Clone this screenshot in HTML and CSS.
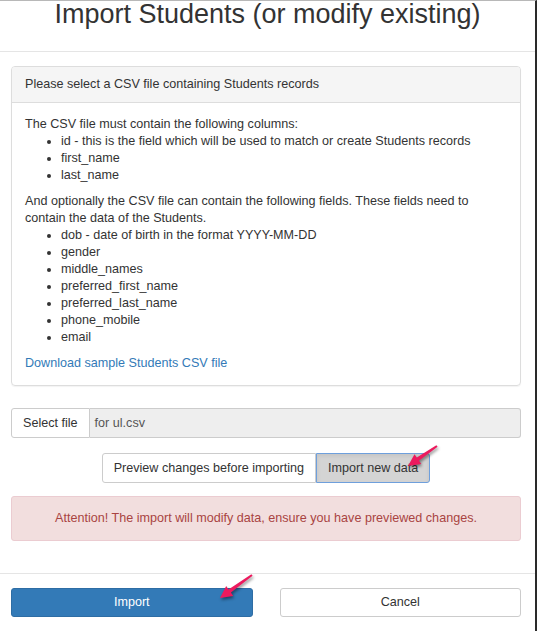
FILE: index.html
```html
<!DOCTYPE html>
<html>
<head>
<meta charset="utf-8">
<link rel="stylesheet" href="styles.css">
</head>
<body>
<div class="modal">
  <div class="modal-header">
    <h4 class="modal-title">Import Students (or modify existing)</h4>
  </div>
  <div class="modal-body">
    <div class="panel">
      <div class="panel-heading">Please select a CSV file containing Students records</div>
      <div class="panel-body">
        <p>The CSV file must contain the following columns:</p>
        <ul>
          <li>id - this is the field which will be used to match or create Students records</li>
          <li>first_name</li>
          <li>last_name</li>
        </ul>
        <p>And optionally the CSV file can contain the following fields. These fields need to contain the data of the Students.</p>
        <ul>
          <li>dob - date of birth in the format YYYY-MM-DD</li>
          <li>gender</li>
          <li>middle_names</li>
          <li>preferred_first_name</li>
          <li>preferred_last_name</li>
          <li>phone_mobile</li>
          <li>email</li>
        </ul>
        <a class="link" href="#">Download sample Students CSV file</a>
      </div>
    </div>
    <div class="input-group">
      <span class="btn-file">Select file</span>
      <span class="file-name">for ul.csv</span>
    </div>
    <div class="btn-group-wrap">
      <div class="btn-group">
        <span class="btn-opt">Preview changes before importing</span>
        <span class="btn-opt active">Import new data</span>
      </div>
    </div>
    <div class="alert">Attention! The import will modify data, ensure you have previewed changes.</div>
  </div>
  <div class="modal-footer">
    <span class="btn btn-primary">Import</span>
    <span class="btn btn-default">Cancel</span>
  </div>
</div>
<svg class="arrows" width="537" height="631" viewBox="0 0 537 631">
  <polygon class="arrow" points="436.4,445.2 416.8,457.6 414.5,454.3 408,466 421.3,464.1 419.0,460.8 437.6,446.8"/>
  <polygon class="arrow" points="251.4,574.2 228.5,589.4 226.2,586.1 220,598 233.2,595.9 230.9,592.6 252.6,575.8"/>
</svg>
</body>
</html>
```
FILE: styles.css
```css
html, body {
  margin: 0;
  padding: 0;
  background: #fff;
}
body {
  font-family: "Liberation Sans", Arial, sans-serif;
  font-size: 12.6px;
  line-height: 17px;
  color: #333;
  width: 537px;
  height: 631px;
  overflow: hidden;
  position: relative;
}
.modal {
  width: 535px;
  height: 630px;
  border-top: 1px solid #b8b8b8;
  border-right: 2px solid #2a2a2a;
  background: #fff;
}
.modal-header {
  height: 50px;
  border-bottom: 1px solid #e5e5e5;
  text-align: center;
}
.modal-title {
  margin: 0;
  font-weight: normal;
  font-size: 27px;
  line-height: 26px;
  color: #333;
}
.modal-body {
  padding: 14px 14px 0 11px;
  height: 522px;
  box-sizing: border-box;
  border-bottom: 1px solid #e5e5e5;
}
.panel {
  border: 1px solid #ddd;
  border-radius: 4px;
  box-shadow: 0 1px 1px rgba(0,0,0,.05);
  margin-bottom: 22px;
}
.panel-heading {
  background: #f5f5f5;
  border-bottom: 1px solid #ddd;
  border-radius: 3px 3px 0 0;
  padding: 9px 13px;
}
.panel-body {
  padding: 13px 13px 13px 13px;
}
.panel-body p {
  margin: 0;
}
.panel-body ul {
  margin: 0 0 9px 0;
  padding-left: 36px;
}
.link {
  color: #337ab7;
  text-decoration: none;
}
.input-group {
  display: flex;
  height: 30px;
}
.btn-file {
  display: flex;
  align-items: center;
  padding: 0 11px;
  border: 1px solid #ccc;
  border-radius: 3px 0 0 3px;
  background: #fff;
}
.file-name {
  flex: 1;
  display: flex;
  align-items: center;
  padding: 0 5px;
  background: #eee;
  border: 1px solid #ccc;
  border-left: none;
  border-radius: 0 3px 3px 0;
  color: #555;
}
.btn-group-wrap {
  display: flex;
  justify-content: center;
  margin-top: 15px;
}
.btn-group {
  display: flex;
  height: 30px;
}
.btn-opt {
  display: flex;
  align-items: center;
  padding: 0 11px;
  border: 1px solid #ccc;
  background: #fff;
  color: #333;
}
.btn-opt:first-child {
  border-radius: 3px 0 0 3px;
}
.btn-opt.active {
  background: #d4d4d4;
  border-color: #6e9fdc;
  border-radius: 0 3px 3px 0;
  box-shadow: inset 0 2px 4px rgba(0,0,0,.08);
}
.alert {
  margin-top: 13px;
  height: 45px;
  box-sizing: border-box;
  display: flex;
  align-items: center;
  justify-content: center;
  background: #f2dede;
  border: 1px solid #ebccd1;
  border-radius: 3px;
  color: #a94442;
}
.modal-footer {
  display: grid;
  grid-template-columns: 1fr 1fr;
  column-gap: 27px;
  padding: 14px 14px 0 11px;
}
.btn {
  height: 29px;
  box-sizing: border-box;
  display: flex;
  align-items: center;
  justify-content: center;
  border: 1px solid #ccc;
  border-radius: 3px;
}
.btn-primary {
  background: #337ab7;
  border-color: #2e6da4;
  color: #fff;
}
.btn-default {
  background: #fff;
  color: #333;
}
.arrows {
  position: absolute;
  left: 0;
  top: 0;
  pointer-events: none;
}
.arrow {
  fill: #ec1a5e;
  filter: drop-shadow(1px 2px 1.5px rgba(0,0,0,.45));
}
```
